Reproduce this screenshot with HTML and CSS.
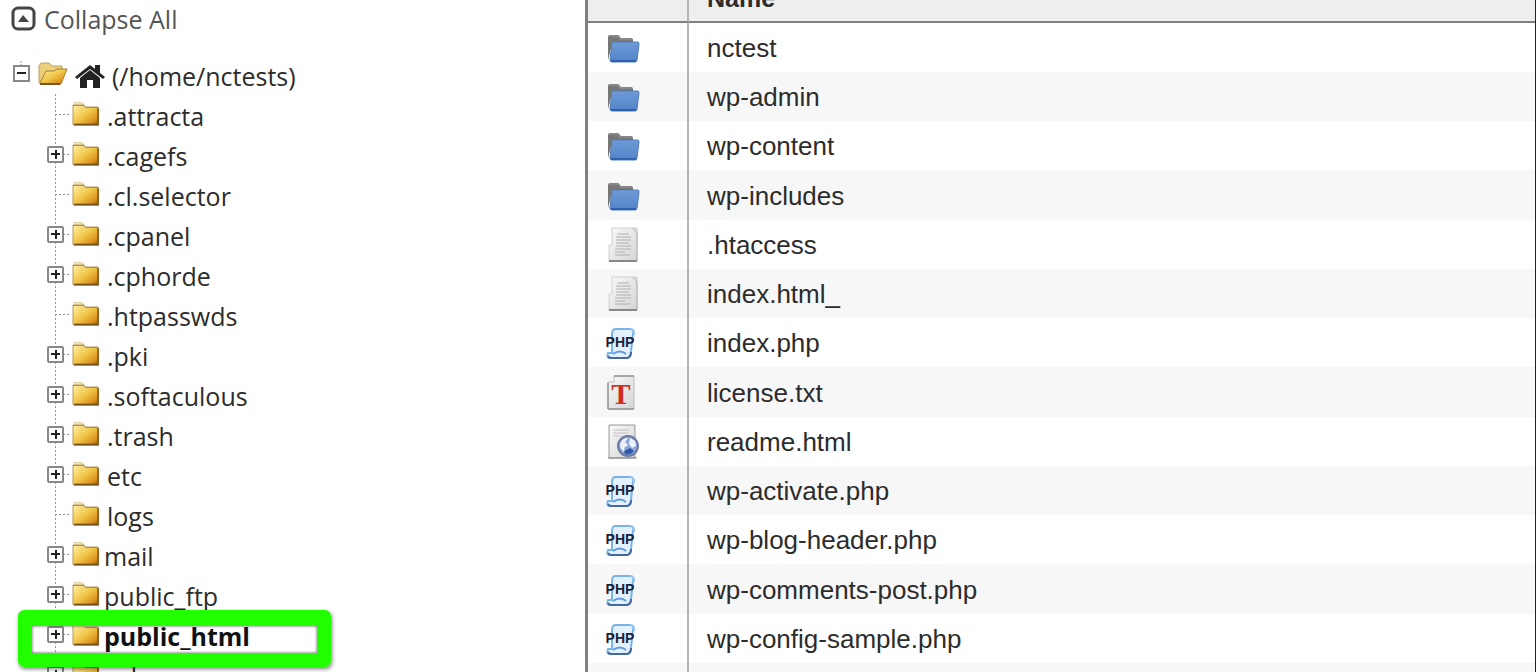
FILE: index.html
```html
<!DOCTYPE html>
<html lang="en">
<head>
    <meta charset="UTF-8">
    <meta name="viewport" content="width=device-width, initial-scale=1.0">
    <title>File Manager</title>
    <link rel="stylesheet" href="styles.css">
</head>
<body>
    <!-- shared icons -->
    <svg class="sprite" aria-hidden="true">
        <defs>
            <linearGradient id="gold" x1="0" y1="0" x2="1" y2="1">
                <stop offset="0" stop-color="#fff0a0"/>
                <stop offset="0.5" stop-color="#f0c548"/>
                <stop offset="0.85" stop-color="#d88a18"/>
                <stop offset="1" stop-color="#6a4410"/>
            </linearGradient>
            <linearGradient id="blue" x1="0" y1="0" x2="0" y2="1">
                <stop offset="0" stop-color="#6f9bd6"/>
                <stop offset="1" stop-color="#5284c8"/>
            </linearGradient>
            <linearGradient id="paper" x1="0" y1="0" x2="1" y2="1">
                <stop offset="0" stop-color="#fafafa"/>
                <stop offset="1" stop-color="#d4d4d4"/>
            </linearGradient>
        </defs>
        <symbol id="folder" viewBox="0 0 30 26">
            <path d="M2 5V3q0-2 1-2h7q1 0 2 2l1 1z" fill="#f0e6b8" stroke="#dccf9c"/>
            <path d="M1 4h11l2 2h13v18H1z" fill="url(#gold)" stroke="#b59a5c"/>
            <path d="M1 4h11l2 2h13" fill="none" stroke="#9a8450"/>
            <path d="M2 24h25" fill="none" stroke="#705020" stroke-width="2"/>
            <path d="M27 7v18" fill="none" stroke="#8a6426" stroke-width="2"/>
        </symbol>
        <symbol id="folder-open" viewBox="0 0 30 24">
            <path d="M1 21V4l2-3h8l3 3h10v6" fill="#ecd07a" stroke="#b8a068"/>
            <path d="M2 21L8 9h8l3-2h10l-6 15H2z" fill="url(#gold)" stroke="#a87c30"/>
            <path d="M2 22h20" stroke="#7a5520" stroke-width="2"/>
        </symbol>
        <symbol id="home" viewBox="0 0 32 26">
            <path d="M1 14L16 2l5 4V2h5v8l5 4-2 2L16 6 3 16z" fill="#222"/>
            <path d="M6 15l10-8 10 8v10h-7v-8h-6v8H6z" fill="#222"/>
        </symbol>
        <symbol id="dir" viewBox="0 -3 34 36">
            <path d="M2 27V4q0-2 2-2h8q1 0 2 2l1 1h10q2 0 2 2v5H6z" fill="#777"/>
            <path d="M3 3h9l2 3h12" fill="none" stroke="#999"/>
            <path d="M6 9h26q1 0 1 2l-2 16q0 2-2 2H6q-2 0-2-2z" fill="url(#blue)" stroke="#4f7cbc"/>
            <path d="M5 28h25" stroke="#2f61ae" stroke-width="2"/>
        </symbol>
        <symbol id="file" viewBox="0 0 34 36">
            <path d="M6 1h25v33H3V18h3z" fill="url(#paper)" stroke="#d0d0d0"/>
            <path d="M27 1l4 5v28" fill="none" stroke="#b0b0b0"/>
            <path d="M3 34h28" stroke="#888" stroke-width="2"/>
            <path d="M11 7h12M10 10h15M10 13h15M10 16h13M10 19h15M9 22h16M9 25h10M9 28h15" stroke="#b0b0b0"/>
        </symbol>
        <symbol id="php" viewBox="0 -2 34 36">
            <path d="M6 8Q6 2 9 2h15q4 0 3 5l-2 18q0 6-4 6H4q-4 0-2-5h4z" fill="#e2f1fd" stroke="#79b3e8" stroke-width="2"/>
            <path d="M2 29q1 2 3 2h16q4-1 4-6" fill="none" stroke="#45699f" stroke-width="2"/>
            <path d="M24 2q5 0 4 6" fill="none" stroke="#9cc8f0" stroke-width="2"/>
            <path d="M7 27q7-5 13 0" fill="none" stroke="#5e9ade" stroke-width="2"/>
        </symbol>
        <symbol id="txt" viewBox="0 0 34 36">
            <path d="M8 1h20v33H2V7h6z" fill="url(#paper)" stroke="#bbb"/>
            <path d="M2 34h26M8 1h20M2 8v26" stroke="#777"/>
        </symbol>
        <symbol id="html" viewBox="0 0 34 36">
            <path d="M3 1h26v33H3z" fill="url(#paper)" stroke="#999"/>
            <path d="M7 6h16M7 9h15M7 12h8" stroke="#c4c4c4"/>
            <circle cx="22" cy="22" r="10" fill="#8fa9d6" stroke="#7079a3" stroke-width="2"/>
            <path d="M14 20q3-7 8-6l-3 4 3 3-4 3 1 4q-5-2-5-8zM24 14l5 3 1 5-4 2-3-4z" fill="#edf2fa"/>
            <path d="M18 27l6-3 4 3q-4 5-9 3z" fill="#2d5cab"/>
            <path d="M2 34h29" stroke="#888"/>
        </symbol>
    </svg>

    <aside class="sidebar">
        <button class="collapse" type="button">
            <svg width="26" height="26" viewBox="0 0 26 26"><rect x="3" y="2" width="21" height="21" rx="5" fill="#fff" stroke="#444" stroke-width="3"/><path d="M8 16l5-7 6 7z" fill="#444"/></svg>
            Collapse All
        </button>

        <div class="root">
            <button class="toggle" type="button" aria-label="Collapse home">
                <svg width="17" height="22" viewBox="0 0 17 22"><path d="M8 0v5" stroke="#999" stroke-dasharray="2 1"/><rect x="1" y="5" width="15" height="15" fill="#fff" stroke="#888" stroke-width="2"/><path d="M4 12h9" stroke="#222" stroke-width="2"/></svg>
            </button>
            <svg class="icon" width="30" height="24"><use href="#folder-open"/></svg>
            <a href="#"><svg class="home" width="32" height="26"><use href="#home"/></svg>(/home/nctests)</a>
        </div>

        <ul class="tree">
            <li><svg class="icon" width="29" height="26"><use href="#folder"/></svg><a href="#">.attracta</a></li>
            <li><button class="toggle plus" type="button" aria-label="Expand .cagefs"></button><svg class="icon" width="29" height="26"><use href="#folder"/></svg><a href="#">.cagefs</a></li>
            <li><svg class="icon" width="29" height="26"><use href="#folder"/></svg><a href="#">.cl.selector</a></li>
            <li><button class="toggle plus" type="button" aria-label="Expand .cpanel"></button><svg class="icon" width="29" height="26"><use href="#folder"/></svg><a href="#">.cpanel</a></li>
            <li><button class="toggle plus" type="button" aria-label="Expand .cphorde"></button><svg class="icon" width="29" height="26"><use href="#folder"/></svg><a href="#">.cphorde</a></li>
            <li><svg class="icon" width="29" height="26"><use href="#folder"/></svg><a href="#">.htpasswds</a></li>
            <li><button class="toggle plus" type="button" aria-label="Expand .pki"></button><svg class="icon" width="29" height="26"><use href="#folder"/></svg><a href="#">.pki</a></li>
            <li><button class="toggle plus" type="button" aria-label="Expand .softaculous"></button><svg class="icon" width="29" height="26"><use href="#folder"/></svg><a href="#">.softaculous</a></li>
            <li><button class="toggle plus" type="button" aria-label="Expand .trash"></button><svg class="icon" width="29" height="26"><use href="#folder"/></svg><a href="#">.trash</a></li>
            <li><button class="toggle plus" type="button" aria-label="Expand etc"></button><svg class="icon" width="29" height="26"><use href="#folder"/></svg><a href="#">etc</a></li>
            <li><svg class="icon" width="29" height="26"><use href="#folder"/></svg><a href="#">logs</a></li>
            <li class="tight"><button class="toggle plus" type="button" aria-label="Expand mail"></button><svg class="icon" width="29" height="26"><use href="#folder"/></svg><a href="#">mail</a></li>
            <li class="tight"><button class="toggle plus" type="button" aria-label="Expand public_ftp"></button><svg class="icon" width="29" height="26"><use href="#folder"/></svg><a href="#">public_ftp</a></li>
            <li class="tight selected"><button class="toggle plus" type="button" aria-label="Expand public_html"></button><svg class="icon" width="29" height="26"><use href="#folder"/></svg><a href="#">public_html</a></li>
            <li><button class="toggle plus" type="button" aria-label="Expand ssl"></button><svg class="icon" width="29" height="26"><use href="#folder"/></svg><a href="#">ssl</a></li>
        </ul>
    </aside>

    <main class="files">
        <table>
            <thead>
                <tr><th class="type"></th><th>Name</th></tr>
            </thead>
            <tbody>
                <tr><td class="type"><svg width="34" height="36"><use href="#dir"/></svg></td><td>nctest</td></tr>
                <tr><td class="type"><svg width="34" height="36"><use href="#dir"/></svg></td><td>wp-admin</td></tr>
                <tr><td class="type"><svg width="34" height="36"><use href="#dir"/></svg></td><td>wp-content</td></tr>
                <tr><td class="type"><svg width="34" height="36"><use href="#dir"/></svg></td><td>wp-includes</td></tr>
                <tr><td class="type"><svg width="34" height="36"><use href="#file"/></svg></td><td>.htaccess</td></tr>
                <tr><td class="type"><svg width="34" height="36"><use href="#file"/></svg></td><td>index.html_</td></tr>
                <tr><td class="type"><svg width="34" height="36"><use href="#php"/><text class="php-letters" x="14" y="22" text-anchor="middle">PHP</text></svg></td><td>index.php</td></tr>
                <tr><td class="type"><svg width="34" height="36"><use href="#txt"/><text class="txt-letter" x="15" y="29" text-anchor="middle">T</text></svg></td><td>license.txt</td></tr>
                <tr><td class="type"><svg width="34" height="36"><use href="#html"/></svg></td><td>readme.html</td></tr>
                <tr><td class="type"><svg width="34" height="36"><use href="#php"/><text class="php-letters" x="14" y="22" text-anchor="middle">PHP</text></svg></td><td>wp-activate.php</td></tr>
                <tr><td class="type"><svg width="34" height="36"><use href="#php"/><text class="php-letters" x="14" y="22" text-anchor="middle">PHP</text></svg></td><td>wp-blog-header.php</td></tr>
                <tr><td class="type"><svg width="34" height="36"><use href="#php"/><text class="php-letters" x="14" y="22" text-anchor="middle">PHP</text></svg></td><td>wp-comments-post.php</td></tr>
                <tr><td class="type"><svg width="34" height="36"><use href="#php"/><text class="php-letters" x="14" y="22" text-anchor="middle">PHP</text></svg></td><td>wp-config-sample.php</td></tr>
                <tr><td class="type"><svg width="34" height="36"><use href="#php"/></svg></td><td></td></tr>
            </tbody>
        </table>
    </main>
</body>
</html>
```

FILE: styles.css
```css
*,
*::before,
*::after {
    box-sizing: border-box;
}
body {
    display: flex;
    height: 100vh;
    margin: 0;
    overflow: hidden;
    background: #fff;
    color: #2c2c2c;
    font-family: "Open Sans", sans-serif;
    font-size: 25px;
}
button {
    padding: 0;
    border: 0;
    background: none;
    font: inherit;
    cursor: pointer;
}
a {
    color: inherit;
    text-decoration: none;
}
svg {
    display: block;
    flex: none;
}
.sprite {
    position: absolute;
    width: 0;
    height: 0;
}

/* folder tree */
.sidebar {
    flex: 0 0 585px;
    overflow: hidden;
}
.collapse {
    display: flex;
    align-items: center;
    gap: 8px;
    height: 38px;
    margin: 0 0 16px 10px;
    color: #555;
}
.root {
    display: flex;
    align-items: center;
    height: 40px;
    padding-left: 13px;
}
.root .toggle {
    padding-bottom: 4px;
}
.root .icon {
    margin-left: 8px;
}
.root a {
    display: flex;
    align-items: center;
    gap: 6px;
    margin-left: 6px;
    padding-top: 4px;
}
.tree {
    margin: 0;
    padding: 0 0 0 55px;
    list-style: none;
}
.tree li {
    position: relative;
    display: flex;
    align-items: center;
    height: 40px;
    padding-left: 17px;
    background: repeating-linear-gradient(#999 0 2px, transparent 2px 4px) 0 0 / 1px 100% no-repeat;
}
/* dotted branch */
.tree li::before {
    content: "";
    position: absolute;
    left: 0;
    width: 16px;
    height: 1px;
    background: repeating-linear-gradient(90deg, #999 0 2px, transparent 2px 4px);
}
.tree a {
    margin-left: 6px;
    padding-top: 3px;
}
.tree .tight a {
    margin-left: 3px;
}
.toggle {
    flex: none;
}
.plus {
    position: absolute;
    left: -8px;
    width: 17px;
    height: 17px;
    border: 2px solid #888;
    border-radius: 2px;
    background:
        linear-gradient(#222, #222) center / 9px 2px no-repeat,
        linear-gradient(#222, #222) center / 2px 9px no-repeat,
        #fff;
}
.selected a {
    color: #111;
    font-weight: bold;
}
/* highlight around the selected folder */
.selected::after {
    content: "";
    position: absolute;
    z-index: 1;
    top: -4px;
    left: -37px;
    width: 313px;
    height: 57px;
    border: 14px solid #2f0;
    border-top-width: 16px;
    border-radius: 6px;
    box-shadow: 1px 2px 4px rgba(0, 0, 0, 0.5), inset 0 0 3px #555;
    pointer-events: none;
}

/* file list */
.files {
    flex: 1;
    min-width: 0;
    margin-top: -28px;
    border-left: 3px solid #808080;
    border-right: 1px solid #222;
    font-family: "Liberation Sans", Arial, sans-serif;
    font-size: 26px;
}
table {
    width: 100%;
    border-collapse: separate;
    border-spacing: 0;
}
th,
td {
    height: 49px;
    padding: 2px 0 0 18px;
    text-align: left;
}
tr:nth-child(4n) td {
    height: 50px;
}
th {
    height: 51px;
    padding-top: 3px;
    border-bottom: 2px solid #808080;
    background: #eee;
    font-size: 25px;
}
.type {
    width: 101px;
    padding-top: 1px;
    border-right: 2px solid #b4b4b4;
}
tbody tr:nth-child(even) {
    background: #f7f7f7;
}
.php-letters {
    fill: #142440;
    font: bold 14px "Liberation Sans", Arial, sans-serif;
}
.txt-letter {
    fill: #d62a1c;
    font: bold 29px "Liberation Serif", serif;
}
```
